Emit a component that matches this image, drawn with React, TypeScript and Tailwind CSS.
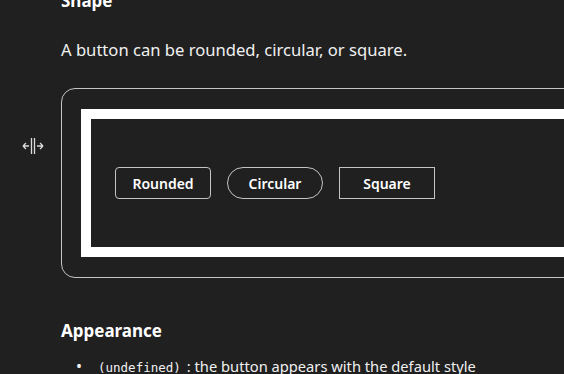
import React from "react";

const shapes = [
  { label: "Rounded", className: "rounded-[4px]" },
  { label: "Circular", className: "rounded-full" },
  { label: "Square", className: "rounded-none" },
];

function ResizeHandle() {
  return (
    <svg width="22" height="18" viewBox="0 0 22 18" fill="none" stroke="#dcdcdc" strokeWidth="1.3">
      <path d="M1 9h6M1 9l3-3M1 9l3 3" />
      <path d="M9.5 1v16M12.5 1v16" />
      <path d="M15 9h6M21 9l-3-3M21 9l-3 3" />
    </svg>
  );
}

export default function App() {
  return (
    <div className="h-screen overflow-hidden bg-[#202020] text-white font-['Noto_Sans',sans-serif]">
      <div className="pl-[61px]">
        <h3 className="-mt-[11px] text-[17px] font-bold leading-[24px]">Shape</h3>
        <p className="mt-[26px] text-[16.6px] leading-[22px] text-[#f0f0f0]">
          A button can be rounded, circular, or square.
        </p>
      </div>

      <div className="mt-[27px] flex">
        <div className="w-[61px] shrink-0 pl-[22px] pt-[49px]">
          <ResizeHandle />
        </div>
        <div className="w-[700px] shrink-0 rounded-[14px] border border-[#c4c4c4] pb-[20px] pl-[19px] pt-[20px]">
          <div className="flex h-[148px] items-center gap-4 border-[10px] border-white bg-[#202020] pl-[24px]">
            {shapes.map((s) => (
              <button
                key={s.label}
                className={`h-8 w-24 border border-[#c4c4c4] text-[14px] font-semibold text-white ${s.className}`}
              >
                {s.label}
              </button>
            ))}
          </div>
        </div>
      </div>

      <div className="pl-[61px]">
        <h3 className="mt-[41px] text-[17px] font-bold leading-[24px]">Appearance</h3>
        <ul className="mt-[12px] text-[14.7px] leading-[22px] text-[#f0f0f0]">
          <li className="flex items-baseline">
            <span className="w-[37px] shrink-0 pl-[15px] text-[16px]">•</span>
            <code className="font-['DejaVu_Sans_Mono',monospace] text-[12.5px]">(undefined)</code>
            <span className="ml-[6px] whitespace-nowrap">: the button appears with the default style</span>
          </li>
        </ul>
      </div>
    </div>
  );
}
